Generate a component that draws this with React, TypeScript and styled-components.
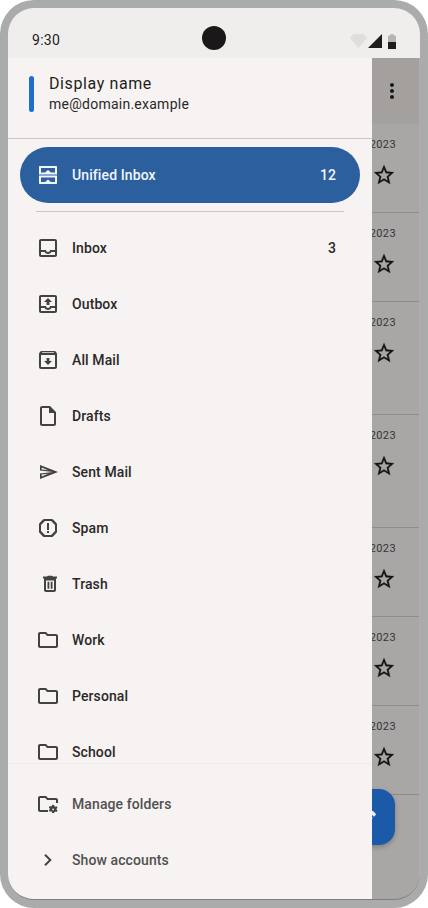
import React from "react";
import styled, { createGlobalStyle } from "styled-components";

const GlobalStyle = createGlobalStyle`
  html, body {
    margin: 0;
    padding: 0;
    background: #ffffff;
  }
  * {
    box-sizing: border-box;
  }
`;

const Frame = styled.div`
  width: 428px;
  height: 908px;
  padding: 8px;
  border-radius: 34px;
  background: #a9acab;
  font-family: Roboto, "Liberation Sans", sans-serif;
`;

const Screen = styled.div`
  width: 412px;
  height: 892px;
  border-radius: 26px;
  overflow: hidden;
  display: flex;
  flex-direction: column;
  background: #a8a7a6;
  border-bottom: 1px solid #7f7f7f;
`;

const StatusBar = styled.div`
  height: 50px;
  flex: none;
  position: relative;
  display: flex;
  align-items: center;
  justify-content: space-between;
  padding: 14px 24px 0 24px;
  background: #f0eeed;
`;

const Clock = styled.span`
  font-size: 14px;
  letter-spacing: 0.3px;
  color: #1d1b1a;
`;

const Camera = styled.div`
  position: absolute;
  left: 194px;
  top: 18px;
  width: 24px;
  height: 24px;
  border-radius: 50%;
  background: #1a1818;
`;

const StatusIcons = styled.div`
  display: flex;
  align-items: center;
  gap: 1px;
  margin-top: 2px;
`;

const BatteryIcon = styled.svg`
  margin-left: 5px;
`;

const Body = styled.div`
  flex: 1;
  min-height: 0;
  display: flex;
`;

const Drawer = styled.div`
  width: 364px;
  flex: none;
  display: flex;
  flex-direction: column;
  background: #f6f3f2;
  position: relative;
  z-index: 2;
`;

const AccountHeader = styled.div`
  height: 81px;
  flex: none;
  display: flex;
  align-items: flex-start;
  gap: 15px;
  padding: 16px 0 0 21px;
  border-bottom: 1px solid #c9c7c6;
`;

const AccountStripe = styled.div`
  width: 5px;
  height: 36px;
  margin-top: 2px;
  border-radius: 3px;
  background: #1f6fc9;
`;

const AccountName = styled.div`
  font-size: 16px;
  line-height: 20px;
  letter-spacing: 0.6px;
  color: #1f1d1c;
`;

const AccountEmail = styled.div`
  font-size: 14px;
  line-height: 20px;
  letter-spacing: 0.25px;
  color: #2a2827;
`;

const FolderArea = styled.div`
  flex: 1;
  min-height: 0;
  overflow: hidden;
  padding-top: 8px;
`;

const UnifiedRow = styled.div`
  height: 56px;
  margin: 0 12px;
  padding: 0 24px 0 16px;
  display: flex;
  align-items: center;
  gap: 12px;
  border-radius: 28px;
  background: #2b5f9e;
  color: #f2f6fb;
  font-size: 14px;
  font-weight: 500;
  letter-spacing: 0.1px;
`;

const SectionDivider = styled.div`
  height: 1px;
  margin: 8px 28px;
  background: #cbc9c8;
`;

const FolderRow = styled.div<{ $muted?: boolean }>`
  height: 56px;
  padding: 0 36px 0 28px;
  display: flex;
  align-items: center;
  gap: 12px;
  font-size: 14px;
  font-weight: 500;
  letter-spacing: 0.1px;
  color: ${(p) => (p.$muted ? "#52504f" : "#2b2928")};
`;

const RowLabel = styled.span`
  flex: 1;
`;

const Footer = styled.div`
  flex: none;
  height: 136px;
  padding-top: 12px;
  border-top: 1px solid #eeebea;
`;

const Icon = styled.svg<{ $color?: string }>`
  width: 24px;
  height: 24px;
  flex: none;
  fill: ${(p) => p.$color || "#444241"};
`;

const MessagePane = styled.div`
  flex: 1;
  min-width: 0;
  position: relative;
  display: flex;
  flex-direction: column;
  border-right: 1px solid #aeafae;
`;

const PaneToolbar = styled.div`
  height: 66px;
  flex: none;
  display: flex;
  align-items: center;
  justify-content: flex-end;
  padding-right: 15px;
  background: #a3a09e;
`;

const MessageRow = styled.div<{ $tall?: boolean }>`
  height: ${(p) => (p.$tall ? 113 : 89)}px;
  flex: none;
  display: flex;
  flex-direction: column;
  align-items: flex-end;
  padding: 13px 23px 0 0;
  border-bottom: 1px solid #8e8d8c;
`;

const MessageDate = styled.span`
  font-size: 11px;
  line-height: 16px;
  letter-spacing: 0.4px;
  white-space: nowrap;
  color: #373534;
`;

const StarIcon = styled.svg`
  width: 24px;
  height: 24px;
  margin-top: 10px;
  fill: #141211;
  stroke: #141211;
  stroke-width: 0.25;
`;

const Fab = styled.div`
  position: absolute;
  right: 24px;
  top: 731px;
  width: 56px;
  height: 56px;
  padding-top: 6px;
  border-radius: 16px;
  background: #1a5aa8;
  box-shadow: 0 2px 5px rgba(0, 0, 0, 0.25);
  display: flex;
  align-items: center;
  justify-content: center;
`;

const icons: Record<string, React.ReactNode> = {
  unified: (
    <path
      fillRule="evenodd"
      d="M4 3h16c.6 0 1 .4 1 1v16c0 .6-.4 1-1 1H4c-.6 0-1-.4-1-1V4c0-.6.4-1 1-1zM5 5h14v4.500h-4l-3-2.500-3 2.500H5zM3 11.500h18v1H3zM5 14.500h14v4.500h-4l-3-2.500-3 2.500H5z"
    />
  ),
  inbox: (
    <path d="M19 3H5c-1.100 0-2 .9-2 2v14c0 1.100.9 2 2 2h14c1.100 0 2-.9 2-2V5c0-1.100-.9-2-2-2zm0 16H5v-3h3.560c.69 1.190 1.970 2 3.450 2s2.750-.81 3.450-2H19v3zm0-5h-4.990c0 1.100-.9 2-2 2s-2-.9-2-2H5V5h14v9z" />
  ),
  outbox: (
    <path d="M19 3H5c-1.100 0-2 .9-2 2v14c0 1.100.9 2 2 2h14c1.100 0 2-.9 2-2V5c0-1.100-.9-2-2-2zm0 16H5v-3h3.560c.69 1.190 1.970 2 3.450 2s2.750-.81 3.450-2H19v3zm0-5h-4.990c0 1.100-.9 2-2 2s-2-.9-2-2H5V5h14v9zM8 10h2.550v3h2.900v-3H16l-4-4z" />
  ),
  allMail: (
    <path
      fillRule="evenodd"
      d="M5.500 3h13c.5 0 .9.200 1.200.6l1 1.300c.2.300.3.600.3 1V19c0 1.100-.9 2-2 2H5c-1.100 0-2-.9-2-2V5.900c0-.4.100-.7.3-1l1-1.300c.3-.4.700-.6 1.200-.6zM5 7v12h14V7zm.8-2h12.400l-.6-.8H6.400zM10.600 10h2.800v3H16l-4 4-4-4h2.600z"
    />
  ),
  drafts: (
    <path d="M14 2H6c-1.100 0-2 .9-2 2v16c0 1.100.9 2 2 2h12c1.100 0 2-.9 2-2V8l-6-6zM6 20V4h7v5h5v11H6z" />
  ),
  sent: (
    <path
      fillRule="evenodd"
      d="M4 5v5.400L16.900 12 4 13.600V19l18-7zM5.700 7.600L12 10.300 5.700 9.400zM5.700 16.400L12 13.700 5.700 14.600z"
    />
  ),
  spam: (
    <path
      fillRule="evenodd"
      d="M8.300 3h7.400c.5 0 1 .2 1.400.6l3.300 3.300c.4.400.6.900.6 1.400v7.400c0 .5-.2 1-.6 1.400l-3.300 3.300c-.4.400-.9.600-1.400.6H8.300c-.5 0-1-.2-1.400-.6l-3.300-3.300c-.4-.4-.6-.9-.6-1.400V8.300c0-.5.200-1 .6-1.400l3.300-3.300C7.300 3.200 7.800 3 8.300 3zm.6 2L5 8.900v6.200L8.900 19h6.200l3.900-3.900V8.900L15.100 5zM11 7h2v7h-2zm0 8h2v2h-2z"
    />
  ),
  trash: (
    <path
      fillRule="evenodd"
      d="M7 4.500h4l.8-.7h4.400l.8.7h4v2H7zM8 6.500h12V18c0 1.100-.9 2-2 2h-8c-1.100 0-2-.9-2-2zM10 8.500V18h8V8.500zM11.500 9.800h1.800v7h-1.800zM14.700 9.800h1.800v7h-1.800z"
    />
  ),
  folder: (
    <path d="M9.170 6l2 2H20v10H4V6h5.170M10 4H4c-1.100 0-1.990.9-1.990 2L2 18c0 1.100.9 2 2 2h16c1.100 0 2-.9 2-2V8c0-1.100-.9-2-2-2h-8l-2-2z" />
  ),
  manage: (
    <path
      fillRule="evenodd"
      d="M4 4h6l2 2h8c1.100 0 2 .9 2 2v3h-2V8h-8.830l-2-2H4v12h8v2H4c-1.100 0-2-.9-2-2V6c0-1.100.9-2 2-2zM18 13l.5 1.300c.3.100.6.200.8.400l1.300-.4.900 1.500-1 .9c.1.300.1.600 0 .9l1 .9-.9 1.500-1.300-.4c-.2.200-.5.300-.8.400L18 21h-1.800l-.4-1.300c-.3-.1-.6-.2-.8-.4l-1.300.4-.9-1.500 1-.9c-.1-.3-.1-.6 0-.9l-1-.9.900-1.500 1.300.4c.2-.2.500-.3.800-.4l.4-1.300zm-.9 3.500a.9.900 0 1 0 0 1.800.9.900 0 0 0 0-1.800z"
    />
  ),
  chevron: <path d="M9.700 6L8.300 7.400 12.900 12l-4.600 4.600L9.700 18l6-6z" />,
  more: (
    <path d="M12 8c1.100 0 2-.9 2-2s-.9-2-2-2-2 .9-2 2 .9 2 2 2zm0 2c-1.100 0-2 .9-2 2s.9 2 2 2 2-.9 2-2-.9-2-2-2zm0 6c-1.100 0-2 .9-2 2s.9 2 2 2 2-.9 2-2-.9-2-2-2z" />
  ),
  pencil: (
    <path d="M3 17.250V21h3.750L17.810 9.940l-3.750-3.750L3 17.250zM20.710 7.040c.39-.39.39-1.020 0-1.410l-2.340-2.340c-.39-.39-1.020-.39-1.410 0l-1.830 1.830 3.750 3.750 1.830-1.830z" />
  ),
};

const folders = [
  { name: "Inbox", icon: "inbox", count: "3" },
  { name: "Outbox", icon: "outbox" },
  { name: "All Mail", icon: "allMail" },
  { name: "Drafts", icon: "drafts" },
  { name: "Sent Mail", icon: "sent" },
  { name: "Spam", icon: "spam" },
  { name: "Trash", icon: "trash" },
  { name: "Work", icon: "folder" },
  { name: "Personal", icon: "folder" },
  { name: "School", icon: "folder" },
];

// row heights differ: the two middle messages have an extra line
const messages = [false, false, true, true, false, false, false];

const App: React.FC = () => {
  return (
    <Frame>
      <GlobalStyle />
      <Screen>
        <StatusBar>
          <Clock>9:30</Clock>
          <Camera />
          <StatusIcons>
            <svg width="17" height="14" viewBox="0 0 17 14">
              <path d="M0 4L3.500 0h10L17 4l-8.500 10z" fill="#e0dedd" />
            </svg>
            <svg width="14" height="14" viewBox="0 0 14 14">
              <path d="M14 0v14H0z" fill="#1f1d1c" />
            </svg>
            <BatteryIcon width="8" height="15" viewBox="0 0 8 15">
              <path d="M2.500 0h3v1.500H8V8H0V1.500h2.500z" fill="#b7b5b4" />
              <path d="M0 8h8v7H0z" fill="#1f1d1c" />
            </BatteryIcon>
          </StatusIcons>
        </StatusBar>
        <Body>
          <Drawer>
            <AccountHeader>
              <AccountStripe />
              <div>
                <AccountName>Display name</AccountName>
                <AccountEmail>me@domain.example</AccountEmail>
              </div>
            </AccountHeader>
            <FolderArea>
              <UnifiedRow>
                <Icon viewBox="0 0 24 24" $color="#f2f6fb">{icons.unified}</Icon>
                <RowLabel>Unified Inbox</RowLabel>
                <span>12</span>
              </UnifiedRow>
              <SectionDivider />
              {folders.map((folder) => (
                <FolderRow key={folder.name}>
                  <Icon viewBox="0 0 24 24">{icons[folder.icon]}</Icon>
                  <RowLabel>{folder.name}</RowLabel>
                  {folder.count && <span>{folder.count}</span>}
                </FolderRow>
              ))}
            </FolderArea>
            <Footer>
              <FolderRow $muted>
                <Icon viewBox="0 0 24 24">{icons.manage}</Icon>
                <RowLabel>Manage folders</RowLabel>
              </FolderRow>
              <FolderRow $muted>
                <Icon viewBox="0 0 24 24">{icons.chevron}</Icon>
                <RowLabel>Show accounts</RowLabel>
              </FolderRow>
            </Footer>
          </Drawer>
          <MessagePane>
            <PaneToolbar>
              <Icon viewBox="0 0 24 24" $color="#1a1818">{icons.more}</Icon>
            </PaneToolbar>
            {messages.map((tall, i) => (
              <MessageRow key={i} $tall={tall}>
                <MessageDate>2023</MessageDate>
                <StarIcon viewBox="0 0 24 24">
                  <path d="M22 9.240l-7.190-.62L12 2 9.190 8.630 2 9.240l5.460 4.730L5.820 21 12 17.270 18.180 21l-1.630-7.030L22 9.240zM12 15.400l-3.760 2.270 1-4.280-3.320-2.880 4.380-.38L12 6.100l1.710 4.040 4.380.38-3.320 2.880 1 4.280L12 15.400z" />
                </StarIcon>
              </MessageRow>
            ))}
            <Fab>
              <Icon viewBox="0 0 24 24" $color="#e8eef6">{icons.pencil}</Icon>
            </Fab>
          </MessagePane>
        </Body>
      </Screen>
    </Frame>
  );
};

export default App;
